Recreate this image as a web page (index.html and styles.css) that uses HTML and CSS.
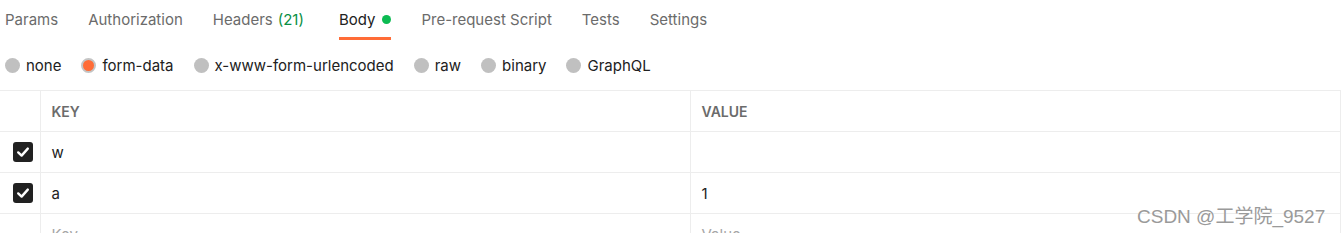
FILE: index.html
```html
<!DOCTYPE html>
<html>
<head>
<meta charset="utf-8">
<link rel="stylesheet" href="styles.css">
</head>
<body>
<div class="page">
  <nav class="tabs">
    <div class="tab">Params</div>
    <div class="tab">Authorization</div>
    <div class="tab headers">Headers <span class="count">(21)</span></div>
    <div class="tab active">Body <span class="dot"></span></div>
    <div class="tab">Pre-request Script</div>
    <div class="tab">Tests</div>
    <div class="tab">Settings</div>
  </nav>
  <div class="radios">
    <label class="radio"><span class="circle"></span>none</label>
    <label class="radio"><span class="circle on"></span>form-data</label>
    <label class="radio"><span class="circle"></span>x-www-form-urlencoded</label>
    <label class="radio"><span class="circle"></span>raw</label>
    <label class="radio"><span class="circle"></span>binary</label>
    <label class="radio"><span class="circle"></span>GraphQL</label>
  </div>
  <table class="grid">
    <colgroup><col class="c-check"><col class="c-key"><col class="c-val"></colgroup>
    <thead>
      <tr><th></th><th>KEY</th><th>VALUE</th></tr>
    </thead>
    <tbody>
      <tr>
        <td class="chk"><span class="box"><svg viewBox="0 0 20 20" width="20" height="20"><path d="M5.2 10.4 L8.6 13.6 L14.8 6.6" fill="none" stroke="#fff" stroke-width="2.4" stroke-linecap="round" stroke-linejoin="round"/></svg></span></td>
        <td>w</td>
        <td></td>
      </tr>
      <tr>
        <td class="chk"><span class="box"><svg viewBox="0 0 20 20" width="20" height="20"><path d="M5.2 10.4 L8.6 13.6 L14.8 6.6" fill="none" stroke="#fff" stroke-width="2.4" stroke-linecap="round" stroke-linejoin="round"/></svg></span></td>
        <td>a</td>
        <td class="num">1</td>
      </tr>
      <tr class="ph">
        <td class="chk"></td>
        <td>Key</td>
        <td>Value</td>
      </tr>
    </tbody>
  </table>
  <div class="watermark">CSDN @工学院_9527</div>
</div>
</body>
</html>
```
FILE: styles.css
```css
html, body {
  margin: 0;
  padding: 0;
  background: #fff;
}
.page {
  position: relative;
  width: 1341px;
  height: 233px;
  overflow: hidden;
  font-family: Inter, "Noto Sans", sans-serif;
  font-size: 15px;
  color: #212121;
}
.tabs {
  display: flex;
  height: 40px;
  padding-left: 5px;
  gap: 30px;
  box-sizing: border-box;
}
.tab {
  display: flex;
  align-items: center;
  gap: 7px;
  color: #6b6b6b;
  padding-top: 1px;
  border-bottom: 3px solid transparent;
  white-space: nowrap;
}
.tab.headers {
  gap: 5px;
  margin-right: 5px;
}
.tab .count {
  color: #0a8f45;
}
.tab.active {
  color: #212121;
  border-bottom-color: #ff6c37;
}
.dot {
  width: 9px;
  height: 9px;
  border-radius: 50%;
  background: #0cbb52;
}
.radios {
  display: flex;
  align-items: center;
  height: 50px;
  padding-left: 5px;
  gap: 20px;
}
.radio {
  display: flex;
  align-items: center;
  gap: 6px;
  color: #212121;
}
.circle {
  width: 15px;
  height: 15px;
  border-radius: 50%;
  background: #c0c0c0;
  box-sizing: border-box;
}
.circle.on {
  background: #ff6c37;
  border: 2px solid #c4c4c4;
}
.grid {
  border-collapse: collapse;
  width: 1340px;
  table-layout: fixed;
  font-size: 15px;
}
.c-check { width: 40px; }
.c-key { width: 650px; }
.c-val { width: 650px; }
.grid th, .grid td {
  height: 40px;
  padding: 0 0 0 11px;
  text-align: left;
  border: 1px solid #ededed;
  vertical-align: middle;
}
.grid tr > :first-child {
  border-left: none;
}
.grid th {
  font-size: 14px;
  font-weight: 600;
  color: #6b6b6b;
}
.grid td {
  color: #212121;
}
.grid td.chk {
  padding: 0 0 0 13px;
}
.box {
  display: block;
  width: 20px;
  height: 20px;
  border-radius: 3px;
  background: #212121;
}
.box svg {
  display: block;
}
.grid .ph td {
  color: #a6a6a6;
}
.watermark {
  position: absolute;
  left: 1137px;
  top: 201px;
  font-family: "Liberation Sans", "Noto Sans CJK SC", sans-serif;
  font-size: 19px;
  color: #9a9a9a;
  text-shadow: 0 0 1px #fff;
  white-space: nowrap;
}
```
